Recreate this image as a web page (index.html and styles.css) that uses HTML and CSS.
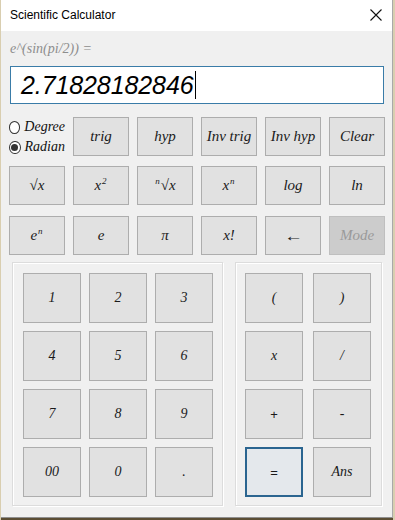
FILE: index.html
```html
<!DOCTYPE html>
<html>
<head>
<meta charset="utf-8">
<link rel="stylesheet" href="styles.css">
</head>
<body>
<div class="window">
  <div class="titlebar">
    <span class="title">Scientific Calculator</span>
    <svg class="close" width="12" height="12" viewBox="0 0 12 12"><path d="M0.5 0.5L11.5 11.5M11.5 0.5L0.5 11.5" stroke="#111" stroke-width="1.1" fill="none"/></svg>
  </div>
  <div class="content">
    <div class="expr">e^(sin(pi/2)) =</div>
    <div class="display"><span class="value">2.71828182846</span><span class="caret"></span></div>
    <div class="funcs">
      <div class="modes">
        <label class="radio"><span class="dot"></span><span>Degree</span></label>
        <label class="radio"><span class="dot on"></span><span>Radian</span></label>
      </div>
      <button class="btn">trig</button>
      <button class="btn">hyp</button>
      <button class="btn">Inv trig</button>
      <button class="btn">Inv hyp</button>
      <button class="btn">Clear</button>
      <button class="btn">√x</button>
      <button class="btn">x<span class="sup">2</span></button>
      <button class="btn"><span class="sup">n</span>√x</button>
      <button class="btn">x<span class="sup">n</span></button>
      <button class="btn">log</button>
      <button class="btn">ln</button>
      <button class="btn">e<span class="sup">n</span></button>
      <button class="btn">e</button>
      <button class="btn">π</button>
      <button class="btn">x!</button>
      <button class="btn"><span class="arrow">←</span></button>
      <button class="btn disabled">Mode</button>
    </div>
    <div class="pads">
      <div class="group numbers">
        <button class="btn">1</button>
        <button class="btn">2</button>
        <button class="btn">3</button>
        <button class="btn">4</button>
        <button class="btn">5</button>
        <button class="btn">6</button>
        <button class="btn">7</button>
        <button class="btn">8</button>
        <button class="btn">9</button>
        <button class="btn">00</button>
        <button class="btn">0</button>
        <button class="btn">.</button>
      </div>
      <div class="group ops">
        <button class="btn">(</button>
        <button class="btn">)</button>
        <button class="btn">x</button>
        <button class="btn">/</button>
        <button class="btn plain">+</button>
        <button class="btn">-</button>
        <button class="btn focus">=</button>
        <button class="btn">Ans</button>
      </div>
    </div>
  </div>
</div>
</body>
</html>
```
FILE: styles.css
```css
html, body {
  margin: 0;
  padding: 0;
}
body {
  width: 395px;
  height: 520px;
  background: #d9ceb0;
  overflow: hidden;
}
.window {
  margin-left: 1px;
  width: 391px;
  height: 517px;
  border-right: 1px solid #a9a9a9;
  border-bottom: 1px solid #8f8f8f;
  background: #f0f0f0;
  box-shadow: 0 2px 0 #5b4d33;
}
.titlebar {
  height: 31px;
  background: #ffffff;
  display: flex;
  align-items: center;
  justify-content: space-between;
  padding: 0 10px 0 9px;
}
.title {
  font-family: "Liberation Sans", Arial, sans-serif;
  font-size: 12px;
  color: #000;
  margin-top: -1px;
}
.close {
  margin-top: -2px;
}
.content {
  padding: 0 0 0 8px;
}
.expr {
  margin: 9px 0 0 1px;
  height: 18px;
  line-height: 18px;
  font-family: "Liberation Serif", "Times New Roman", serif;
  font-style: italic;
  font-size: 14px;
  color: #8d8d8d;
}
.display {
  margin: 8px 0 0 1px;
  width: 372px;
  height: 36px;
  border: 1px solid #3a7ca8;
  background: #ffffff;
  display: flex;
  align-items: center;
  padding: 0;
}
.value {
  font-family: "Liberation Sans", Arial, sans-serif;
  font-style: italic;
  font-size: 25px;
  color: #000;
  margin-left: 10px;
  letter-spacing: -0.1px;
}
.caret {
  display: inline-block;
  width: 1px;
  height: 28px;
  background: #000;
  margin-left: 1px;
}
.funcs {
  margin-top: 13px;
  display: grid;
  grid-template-columns: repeat(6, 56px);
  grid-template-rows: 39px 40px 39px;
  column-gap: 8px;
  row-gap: 10px;
}
.btn {
  box-sizing: border-box;
  width: 100%;
  height: 39px;
  margin: 0;
  padding: 0;
  background: #e1e1e1;
  border: 1px solid #adadad;
  border-radius: 0;
  font-family: "Liberation Serif", "Times New Roman", "DejaVu Serif", serif;
  font-style: italic;
  font-size: 15px;
  color: #1a1a1a;
  display: flex;
  align-items: center;
  justify-content: center;
}
.sup {
  font-size: 9px;
  position: relative;
  top: -5px;
  margin: 0 1px;
}
.arrow {
  display: inline-block;
  font-style: normal;
  font-size: 15px;
  font-family: "Liberation Serif", "DejaVu Serif", serif;
  transform: scaleX(1.25);
  margin-top: 1px;
}
.disabled {
  background: #cccccc;
  border-color: #bfbfbf;
  color: #9a9a9a;
}
.modes {
  display: flex;
  flex-direction: column;
  justify-content: center;
  gap: 4px;
  margin-top: 1px;
}
.radio {
  display: flex;
  align-items: center;
  gap: 4px;
  font-family: "Liberation Serif", "Times New Roman", serif;
  font-style: italic;
  font-size: 14px;
  height: 16px;
  color: #111;
}
.dot {
  box-sizing: border-box;
  width: 13px;
  height: 13px;
  border: 1px solid #333;
  border-radius: 50%;
  background: #fff;
  display: flex;
  align-items: center;
  justify-content: center;
}
.dot.on::after {
  content: "";
  width: 7px;
  height: 7px;
  border-radius: 50%;
  background: #333;
}
.pads {
  margin-top: 7px;
  margin-left: 3px;
  display: flex;
  gap: 12px;
}
.group {
  box-sizing: border-box;
  height: 244px;
  border: 1px solid #dcdcdc;
  box-shadow: inset 1px 1px 0 #ffffff, 1px 1px 0 #ffffff;
  display: grid;
  grid-template-rows: repeat(4, 50px);
  row-gap: 8px;
  padding-top: 10px;
}
.group .btn {
  height: 50px;
  font-size: 14px;
}
.numbers {
  width: 211px;
  grid-template-columns: repeat(3, 58px);
  column-gap: 8px;
  padding-left: 10px;
}
.ops {
  width: 147px;
  grid-template-columns: repeat(2, 58px);
  column-gap: 10px;
  padding-left: 9px;
}
.group .focus {
  border: 2px solid #2b6590;
  background: #e4e8ec;
  font-style: normal;
  font-family: "Liberation Sans", Arial, sans-serif;
  font-size: 13px;
}
.group .plain {
  font-style: normal;
  font-family: "Liberation Sans", Arial, sans-serif;
  font-size: 13px;
}
```
